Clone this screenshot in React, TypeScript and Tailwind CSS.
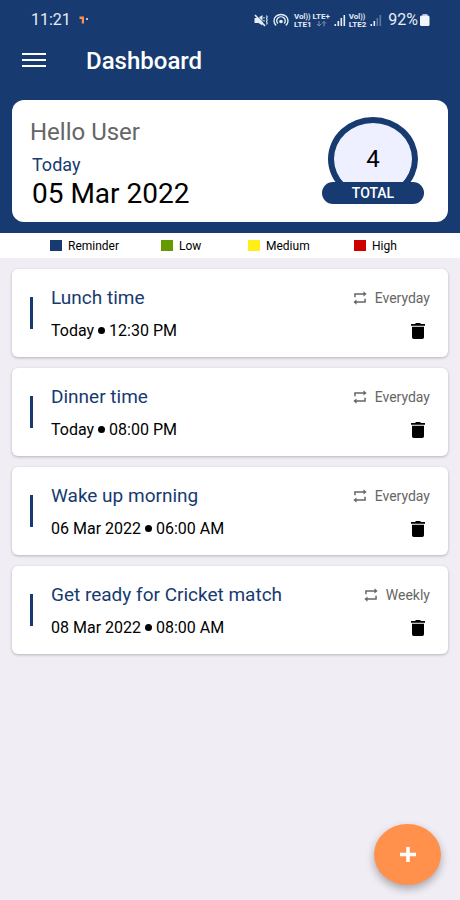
const TEXT_FONT = "font-['Roboto','Liberation_Sans',sans-serif]";

type Reminder = {
  title: string;
  day: string;
  time: string;
  repeat: string;
};

const reminders: Reminder[] = [
  { title: "Lunch time", day: "Today", time: "12:30 PM", repeat: "Everyday" },
  { title: "Dinner time", day: "Today", time: "08:00 PM", repeat: "Everyday" },
  { title: "Wake up morning", day: "06 Mar 2022", time: "06:00 AM", repeat: "Everyday" },
  { title: "Get ready for Cricket match", day: "08 Mar 2022", time: "08:00 AM", repeat: "Weekly" },
];

function MuteIcon() {
  return (
    <svg className="h-[13px] w-[14px]" viewBox="0 0 14 13" fill="none" aria-hidden="true">
      <path d="M0.500 4H4L8.500 1V11.500L4.500 9H0.500z" fill="#e6ecf6" />
      <path d="M2.500 1L12 11" stroke="#173b70" strokeWidth="0.800" />
      <path d="M1 1L11 12" stroke="#e6ecf6" strokeWidth="1.600" />
      <path d="M10 3v1.500M10 6v1.500M12.500 1.500l0.700 1.500-0.700 1.500 0.700 1.500-0.700 1.500 0.700 1.500-0.700 1.500" stroke="#e6ecf6" strokeWidth="1.100" />
    </svg>
  );
}

function HotspotIcon() {
  return (
    <svg className="h-[14px] w-4" viewBox="0 0 16 14" fill="none" stroke="#e6ecf6" aria-hidden="true">
      <path d="M3.200 12.500A7 6.400 0 1 1 12.800 12.500" strokeWidth="1.400" />
      <path d="M4.900 10.600A4.300 4 0 1 1 11.100 10.600" strokeWidth="1.400" />
      <circle cx="8" cy="8.500" r="1.800" fill="#e6ecf6" stroke="none" />
    </svg>
  );
}

function SignalIcon({ strength }: { strength: number }) {
  return (
    <svg className="h-3 w-3" viewBox="0 0 12 12" aria-hidden="true">
      {[2, 5, 8, 11].map((h, i) => (
        <rect key={h} x={i * 3 + 0.5} y={12 - h} width="1.6" height={h} fill="#e6ecf6" opacity={i < strength ? 1 : 0.35} />
      ))}
    </svg>
  );
}

function StatusBar() {
  return (
    <div className="flex h-10 items-center pl-[31px] pr-[30px] text-[#e6ecf6]">
      <span className="text-base leading-5">11:21</span>
      <svg className="ml-2 h-2 w-[10px]" viewBox="0 0 10 8" aria-hidden="true">
        <path d="M0.500 0.500H5V7.500H2.800V3H0.500z" fill="#ff914d" />
        <circle cx="8" cy="3" r="1" fill="#e6ecf6" />
      </svg>
      <div className="ml-auto flex items-center">
        <MuteIcon />
        <span className="ml-[5px] flex"><HotspotIcon /></span>
        <span className="ml-[5px] flex flex-col text-[8px] font-bold leading-[7px]">
          <span>Vo<span className="text-[7px]">l))</span></span>
          <span>LTE1</span>
        </span>
        <span className="ml-px flex flex-col items-center text-[8px] font-bold leading-[7px]">
          <span>LTE+</span>
          <svg className="h-[7px] w-[11px]" viewBox="0 0 11 7" fill="none" stroke="#e6ecf6" opacity="0.500" aria-hidden="true">
            <path d="M3 1v5M1 4l2 2 2-2M8 6.500v-5M6 3.500l2-2 2 2" />
          </svg>
        </span>
        <span className="ml-1 flex"><SignalIcon strength={4} /></span>
        <span className="ml-[3px] flex flex-col text-[8px] font-bold leading-[7px]">
          <span>Vo<span className="text-[7px]">l))</span></span>
          <span>LTE2</span>
        </span>
        <span className="ml-1 flex"><SignalIcon strength={2} /></span>
        <span className="ml-1.5 text-base leading-5">92%</span>
        <svg className="ml-0.5 h-3 w-[10px]" viewBox="0 0 10 12" fill="#f2f5fb" aria-hidden="true">
          <rect x="2.500" y="0" width="5" height="3" rx="0.500" opacity="0.700" />
          <rect x="0" y="1.500" width="9.500" height="10.500" rx="1.500" />
        </svg>
      </div>
    </div>
  );
}

function RepeatIcon() {
  return (
    <svg className="h-[14px] w-[14px]" viewBox="0 0 14 14" aria-hidden="true">
      <path
        d="M1.200 6.200V2.200H10.500V0.200L13.600 2.900L10.500 5.500V3.700H2.700V6.200zM12.800 7.800V11.800H3.500V13.800L0.400 11.100L3.500 8.500V10.300H11.300V7.800z"
        fill="#666666"
      />
    </svg>
  );
}

function TrashIcon() {
  return (
    <svg className="h-4 w-[14px]" viewBox="0 0 14 16" aria-hidden="true">
      <path d="M0 1H4L5 0H9L10 1H14V2.700H0zM1 3.700H13V14.300Q13 16 11.300 16H2.700Q1 16 1 14.300z" fill="#000000" />
    </svg>
  );
}

function LegendItem({ label, swatch, className }: { label: string; swatch: string; className: string }) {
  return (
    <li className={`flex items-center gap-1.5 ${className}`}>
      <span className={`h-[11px] w-3 ${swatch}`} />
      <span>{label}</span>
    </li>
  );
}

function ReminderCard({ title, day, time, repeat }: Reminder) {
  return (
    <li className="flex h-[88px] items-center rounded-md bg-white px-[18px] shadow-[0_1px_3px_rgba(0,0,0,0.25)]">
      <span className="h-8 w-[3px] shrink-0 bg-[#173b70]" />
      <div className="ml-[18px] flex min-w-0 grow flex-col gap-[9px] pt-0.5">
        <div className="flex items-center">
          <h2 className="grow text-[19px] leading-6 text-[#173b70]">{title}</h2>
          <RepeatIcon />
          <span className="ml-2 text-sm leading-6 text-[#666666]">{repeat}</span>
        </div>
        <div className="flex items-center">
          <p className="flex grow items-center gap-1 text-base leading-6 text-black">
            <span>{day}</span>
            <span className="size-[7px] rounded-full bg-black" />
            <span>{time}</span>
          </p>
          <button type="button" aria-label={`Delete ${title}`} className="mr-[5px] flex">
            <TrashIcon />
          </button>
        </div>
      </div>
    </li>
  );
}

export default function App() {
  return (
    <div className={`min-h-screen bg-[#f0edf5] ${TEXT_FONT}`}>
      <header className="bg-[#173b70] pb-[11px]">
        <StatusBar />
        <div className="flex h-[60px] items-start pl-[22px]">
          <button type="button" aria-label="Open menu" className="mt-[13px] flex w-6 flex-col gap-1">
            <span className="h-0.5 w-full bg-white" />
            <span className="h-0.5 w-full bg-white" />
            <span className="h-0.5 w-full bg-white" />
          </button>
          <h1 className="ml-10 mt-1.5 text-2xl font-medium leading-[30px] text-white">Dashboard</h1>
        </div>
        <section className="mx-3 flex h-[122px] items-start justify-between rounded-xl bg-white pl-[18px] pr-6">
          <div className="pt-[18px]">
            <p className="text-2xl leading-7 text-[#666666]">Hello User</p>
            <p className="ml-0.5 mt-[9px] text-lg leading-5 text-[#173b70]">Today</p>
            <p className="ml-0.5 mt-1 text-[28px] leading-[30px] text-black">05 Mar 2022</p>
          </div>
          <div className="flex flex-col items-center pt-[17px]">
            <div className="flex h-[84px] w-[90px] items-center justify-center rounded-[50%] border-[6px] border-[#173b70] bg-[#eef0ff]">
              <span className="text-2xl leading-8 text-black">4</span>
            </div>
            <div className="-mt-[19px] flex h-[22px] w-[102px] items-center justify-center rounded-full bg-[#173b70] text-sm font-medium text-white">
              TOTAL
            </div>
          </div>
        </section>
      </header>

      <ul className="flex h-[25px] items-center bg-white pl-[50px] text-xs text-black">
        <LegendItem label="Reminder" swatch="bg-[#173b70]" className="w-[111px]" />
        <LegendItem label="Low" swatch="bg-[#669900]" className="w-[87px]" />
        <LegendItem label="Medium" swatch="bg-[#ffee18]" className="w-[106px]" />
        <LegendItem label="High" swatch="bg-[#cc0000]" className="" />
      </ul>

      <ul className="flex flex-col gap-[11px] px-3 py-[11px]">
        {reminders.map((reminder) => (
          <ReminderCard key={reminder.title} {...reminder} />
        ))}
      </ul>

      <button
        type="button"
        aria-label="Add reminder"
        className="fixed bottom-[15px] right-[19px] flex h-[61px] w-[67px] items-center justify-center rounded-[50%] bg-[#ff914d] shadow-[0_4px_8px_rgba(0,0,0,0.3)]"
      >
        <svg className="h-[15px] w-4" viewBox="0 0 16 15" fill="none" stroke="#ffffff" strokeWidth="3.500" aria-hidden="true">
          <path d="M8 0v15M0 7.500h16" />
        </svg>
      </button>
    </div>
  );
}
